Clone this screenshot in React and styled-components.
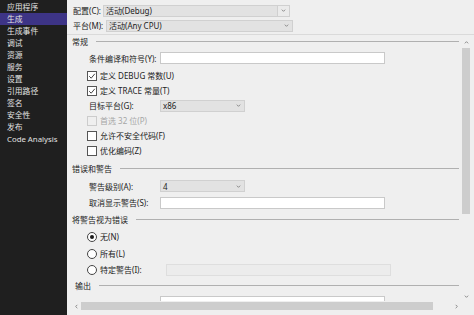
import React from 'react'
import styled, { createGlobalStyle } from 'styled-components'

const GlobalStyle = createGlobalStyle`
  html, body {
    margin: 0;
    padding: 0;
    width: 474px;
    height: 315px;
    overflow: hidden;
    background: #efefef;
  }
  body {
    font-family: "Noto Sans", "Noto Sans CJK SC", sans-serif;
  }
`

const Frame = styled.div`
  display: flex;
  width: 474px;
  height: 315px;
`

const Sidebar = styled.nav`
  width: 67px;
  flex-shrink: 0;
  background: #1f1f1f;
  padding-top: 1px;
  box-sizing: border-box;
`

const NavItem = styled.div`
  height: 12px;
  line-height: 12px;
  padding-left: 7px;
  font-size: 7.8px;
  color: #e2e2e2;
  white-space: nowrap;
  background: ${({ active }) => (active ? '#3d3486' : 'transparent')};
`

const Main = styled.div`
  flex: 1;
  display: flex;
  flex-direction: column;
  background: #efefef;
  min-width: 0;
`

const Header = styled.div`
  height: 35px;
  box-sizing: border-box;
  padding: 4px 0 0 6px;
  border-bottom: 1px solid #dadada;
  display: flex;
  flex-direction: column;
  gap: 2px;
`

const TopRow = styled.div`
  display: flex;
  align-items: center;
  height: 13px;
`

const TopLabel = styled.span`
  width: ${({ w }) => w}px;
  font-size: 8px;
  color: #222;
  white-space: nowrap;
`

const SelectBox = styled.div`
  width: ${({ w }) => w}px;
  height: ${({ h }) => h || 12}px;
  box-sizing: border-box;
  display: flex;
  align-items: center;
  background: #e2e2e2;
  border: 1px solid #d0d0d0;
  font-size: 8px;
  color: #222;
  padding-left: 2px;
`

const SelectText = styled.span`
  flex: 1;
  white-space: nowrap;
`

const ChevronCell = styled.span`
  width: 11px;
  height: 100%;
  display: flex;
  align-items: center;
  justify-content: center;
  border-left: ${({ split }) => (split ? '1px solid #d0d0d0' : 'none')};
  background: ${({ split }) => (split ? '#ebebeb' : 'transparent')};
`

const ScrollArea = styled.div`
  flex: 1;
  display: grid;
  grid-template-columns: 1fr 10px;
  grid-template-rows: 1fr 10px;
  margin: 0 3px 4px 0;
  min-height: 0;
`

const Viewport = styled.div`
  overflow: hidden;
`

const Content = styled.div`
  display: flex;
  flex-direction: column;
  width: 392px;
`

const SectionHead = styled.div`
  height: ${({ h }) => h}px;
  display: flex;
  align-items: center;
  padding-left: ${({ indent }) => indent || 5}px;
  gap: 8px;
  font-size: 8px;
  color: #222;
  &::after {
    content: '';
    flex: 1;
    height: 1px;
    background: #b0b0b0;
  }
`

const Row = styled.div`
  height: ${({ h }) => h}px;
  display: flex;
  align-items: ${({ top }) => (top ? 'flex-start' : 'center')};
  padding-left: 20px;
  font-size: 8px;
  color: ${({ disabled }) => (disabled ? '#a6a6a6' : '#222')};
  white-space: nowrap;
`

const FieldLabel = styled.span`
  width: 73px;
  flex-shrink: 0;
  padding-left: 2px;
  box-sizing: border-box;
`

const TextInput = styled.div`
  width: 225px;
  height: 12px;
  box-sizing: border-box;
  background: ${({ disabled }) => (disabled ? '#ececec' : '#ffffff')};
  border: 1px solid ${({ disabled }) => (disabled ? '#dedede' : '#c9c9c9')};
  margin-top: ${({ mt }) => mt || 0}px;
  margin-left: ${({ ml }) => ml || 0}px;
`

const Box = styled.span`
  width: 10px;
  height: 10px;
  box-sizing: border-box;
  border: 1px solid ${({ disabled }) => (disabled ? '#cccccc' : '#555')};
  background: ${({ disabled }) => (disabled ? '#efefef' : '#ffffff')};
  margin-right: 3px;
  display: flex;
  align-items: center;
  justify-content: center;
  flex-shrink: 0;
`

const RadioDot = styled.span`
  width: 10px;
  height: 10px;
  box-sizing: border-box;
  border-radius: 50%;
  border: 1px solid #444;
  background: #ffffff;
  margin-right: 3px;
  display: flex;
  align-items: center;
  justify-content: center;
  flex-shrink: 0;
  &::after {
    content: '';
    width: 4px;
    height: 4px;
    border-radius: 50%;
    background: ${({ on }) => (on ? '#1a1a1a' : 'transparent')};
  }
`

const VScroll = styled.div`
  display: flex;
  flex-direction: column;
  align-items: center;
  background: #efefef;
  padding-top: 3px;
`

const HScroll = styled.div`
  display: flex;
  align-items: center;
  background: #efefef;
  padding-left: 5px;
`

const Arrow = styled.span`
  width: 9px;
  height: 9px;
  display: flex;
  align-items: center;
  justify-content: center;
  flex-shrink: 0;
`

const VThumb = styled.div`
  width: 8px;
  height: 166px;
  background: #cdcdcd;
  margin-top: 1px;
`

const HThumb = styled.div`
  width: 352px;
  height: 8px;
  background: #cdcdcd;
`

const Track = styled.div`
  flex: 1;
`

const Corner = styled.div`
  background: #efefef;
`

const Chevron = ({ dir = 'down', size = 5 }) => {
  const pts = {
    down: '1,2 3,4 5,2',
    up: '1,4 3,2 5,4',
    left: '4,1 2,3 4,5',
    right: '2,1 4,3 2,5'
  }[dir]
  return (
    <svg width={size} height={size} viewBox="0 0 6 6">
      <polyline points={pts} fill="none" stroke="#7a7a7a" strokeWidth="1" />
    </svg>
  )
}

const Check = () => (
  <svg width="8" height="8" viewBox="0 0 8 8">
    <polyline points="1.2,4.2 3.2,6.2 6.8,1.8" fill="none" stroke="#444" strokeWidth="1" />
  </svg>
)

const Select = ({ w, text, split }) => (
  <SelectBox w={w}>
    <SelectText>{text}</SelectText>
    <ChevronCell split={split}>
      <Chevron />
    </ChevronCell>
  </SelectBox>
)

const navItems = [
  '应用程序',
  '生成',
  '生成事件',
  '调试',
  '资源',
  '服务',
  '设置',
  '引用路径',
  '签名',
  '安全性',
  '发布',
  'Code Analysis'
]

const App = () => (
  <>
    <GlobalStyle />
    <Frame>
      <Sidebar>
        {navItems.map((item) => (
          <NavItem key={item} active={item === '生成'}>
            {item}
          </NavItem>
        ))}
      </Sidebar>
      <Main>
        <Header>
          <TopRow>
            <TopLabel w={30}>配置(C):</TopLabel>
            <Select w={187} text="活动(Debug)" split />
          </TopRow>
          <TopRow>
            <TopLabel w={33}>平台(M):</TopLabel>
            <Select w={187} text="活动(Any CPU)" />
          </TopRow>
        </Header>
        <ScrollArea>
          <Viewport>
            <Content>
              <SectionHead h={13}>常规</SectionHead>
              <Row h={20}>
                <FieldLabel>条件编译和符号(Y):</FieldLabel>
                <TextInput />
              </Row>
              <Row h={15}>
                <Box><Check /></Box>定义 DEBUG 常数(U)
              </Row>
              <Row h={15}>
                <Box><Check /></Box>定义 TRACE 常量(T)
              </Row>
              <Row h={15}>
                <FieldLabel>目标平台(G):</FieldLabel>
                <Select w={85} text="x86" />
              </Row>
              <Row h={15} disabled>
                <Box disabled />首选 32 位(P)
              </Row>
              <Row h={15}>
                <Box />允许不安全代码(F)
              </Row>
              <Row h={15}>
                <Box />优化编码(Z)
              </Row>
              <SectionHead h={20}>错误和警告</SectionHead>
              <Row h={16}>
                <FieldLabel>警告级别(A):</FieldLabel>
                <Select w={85} text="4" />
              </Row>
              <Row h={17}>
                <FieldLabel>取消显示警告(S):</FieldLabel>
                <TextInput />
              </Row>
              <SectionHead h={16}>将警告视为错误</SectionHead>
              <Row h={19}>
                <RadioDot on />无(N)
              </Row>
              <Row h={15}>
                <RadioDot />所有(L)
              </Row>
              <Row h={17}>
                <RadioDot />特定警告(I):
                <TextInput disabled ml={24} />
              </Row>
              <SectionHead h={14} indent={8}>输出</SectionHead>
              <Row h={18} top>
                <FieldLabel />
                <TextInput mt={4} />
              </Row>
            </Content>
          </Viewport>
          <VScroll>
            <Arrow><Chevron dir="up" /></Arrow>
            <VThumb />
            <Track />
            <Arrow><Chevron dir="down" /></Arrow>
          </VScroll>
          <HScroll>
            <Arrow><Chevron dir="left" /></Arrow>
            <HThumb />
            <Track />
            <Arrow><Chevron dir="right" /></Arrow>
          </HScroll>
          <Corner />
        </ScrollArea>
      </Main>
    </Frame>
  </>
)

export default App
